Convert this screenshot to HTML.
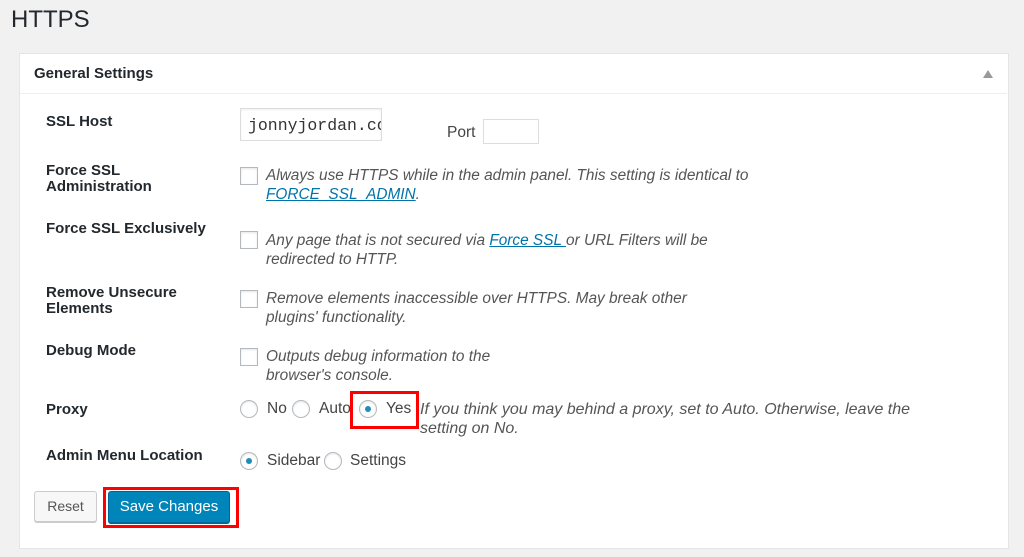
<!DOCTYPE html><html><head><style>
body{margin:0;width:1024px;height:557px;background:#f1f1f1;font-family:"Liberation Sans",sans-serif;position:relative;overflow:hidden;color:#23282d}
.a{position:absolute;white-space:nowrap}
.l{font-size:15px;font-weight:bold;color:#23282d;line-height:16px}
.d{font-size:15.4px;font-style:italic;color:#555;line-height:19px}
.cb{position:absolute;width:16px;height:16px;border:1px solid #b4b9be;background:#fff;box-shadow:inset 0 1px 2px rgba(0,0,0,.1)}
.r{position:absolute;width:16px;height:16px;border:1px solid #b4b9be;border-radius:50%;background:#fff;box-shadow:inset 0 1px 2px rgba(0,0,0,.1)}
.r.on::after{content:"";position:absolute;left:5px;top:5px;width:6px;height:6px;border-radius:50%;background:#1e8cbe}
.t{font-size:15.5px;color:#444}
a{color:#0073aa}
.red{position:absolute;border:3px solid #f00;box-sizing:border-box}
</style></head><body>
<div class="a" style="left:11px;top:6px;font-size:24px;color:#23282d">HTTPS</div>
<div style="position:absolute;left:19px;top:53px;width:988px;height:494px;background:#fff;border:1px solid #e5e5e5"></div>
<div style="position:absolute;left:20px;top:93px;width:987px;height:1px;background:#eee"></div>
<div class="a" style="left:34px;top:65px;font-size:15px;font-weight:bold;color:#23282d">General Settings</div>
<div class="a" style="left:983px;top:70px;width:0;height:0;border-left:5px solid transparent;border-right:5px solid transparent;border-bottom:8px solid #999"></div>

<div class="a l" style="left:46px;top:114px">SSL Host</div>
<div style="position:absolute;left:240px;top:108px;width:142px;height:33px;border:1px solid #ddd;box-sizing:border-box;box-shadow:inset 0 1px 2px rgba(0,0,0,.07);overflow:hidden"><span style="position:absolute;left:7px;top:7px;font-family:'Liberation Mono',monospace;font-size:16.5px;color:#333">jonnyjordan.com</span></div>
<div class="a t" style="left:447px;top:124px">Port</div>
<div style="position:absolute;left:483px;top:119px;width:56px;height:25px;border:1px solid #ddd;box-sizing:border-box"></div>

<div class="a l" style="left:46px;top:163px">Force SSL<br>Administration</div>
<div class="cb" style="left:240px;top:167px"></div>
<div class="a d" style="left:266px;top:166px">Always use HTTPS while in the admin panel. This setting is identical to<br><a href="#">FORCE_SSL_ADMIN</a>.</div>

<div class="a l" style="left:46px;top:221px">Force SSL Exclusively</div>
<div class="cb" style="left:240px;top:231px"></div>
<div class="a d" style="left:266px;top:231px">Any page that is not secured via <a href="#">Force SSL </a>or URL Filters will be<br>redirected to HTTP.</div>

<div class="a l" style="left:46px;top:285px">Remove Unsecure<br>Elements</div>
<div class="cb" style="left:240px;top:290px"></div>
<div class="a d" style="left:266px;top:289px">Remove elements inaccessible over HTTPS. May break other<br>plugins' functionality.</div>

<div class="a l" style="left:46px;top:343px">Debug Mode</div>
<div class="cb" style="left:240px;top:348px"></div>
<div class="a d" style="left:266px;top:347px">Outputs debug information to the<br>browser's console.</div>

<div class="a l" style="left:46px;top:402px">Proxy</div>
<div class="r" style="left:240px;top:400px"></div><div class="a t" style="left:267px;top:400px">No</div>
<div class="r" style="left:292px;top:400px"></div><div class="a t" style="left:319px;top:400px;width:33px;overflow:hidden">Auto</div>
<div class="r on" style="left:359px;top:400px"></div><div class="a t" style="left:386px;top:400px">Yes</div>
<div class="red" style="left:350px;top:391px;width:69px;height:38px"></div>
<div class="a d" style="left:420px;top:400px;font-size:16px">If you think you may behind a proxy, set to Auto. Otherwise, leave the<br>setting on No.</div>

<div class="a l" style="left:46px;top:448px">Admin Menu Location</div>
<div class="r on" style="left:240px;top:452px"></div><div class="a t" style="left:267px;top:452px">Sidebar</div>
<div class="r" style="left:324px;top:452px"></div><div class="a t" style="left:350px;top:452px">Settings</div>

<div style="position:absolute;left:34px;top:491px;width:63px;height:31px;box-sizing:border-box;border:1px solid #ccc;border-radius:3px;background:#f7f7f7;box-shadow:0 1px 0 #ccc;font-size:14px;color:#555;text-align:center;line-height:29px">Reset</div>
<div style="position:absolute;left:108px;top:491px;width:122px;height:32px;box-sizing:border-box;border:1px solid #006799;border-radius:3px;background:#0085ba;box-shadow:0 1px 0 #006799;font-size:15px;color:#fff;text-align:center;line-height:30px">Save Changes</div>
<div class="red" style="left:103px;top:487px;width:136px;height:41px"></div>
</body></html>
